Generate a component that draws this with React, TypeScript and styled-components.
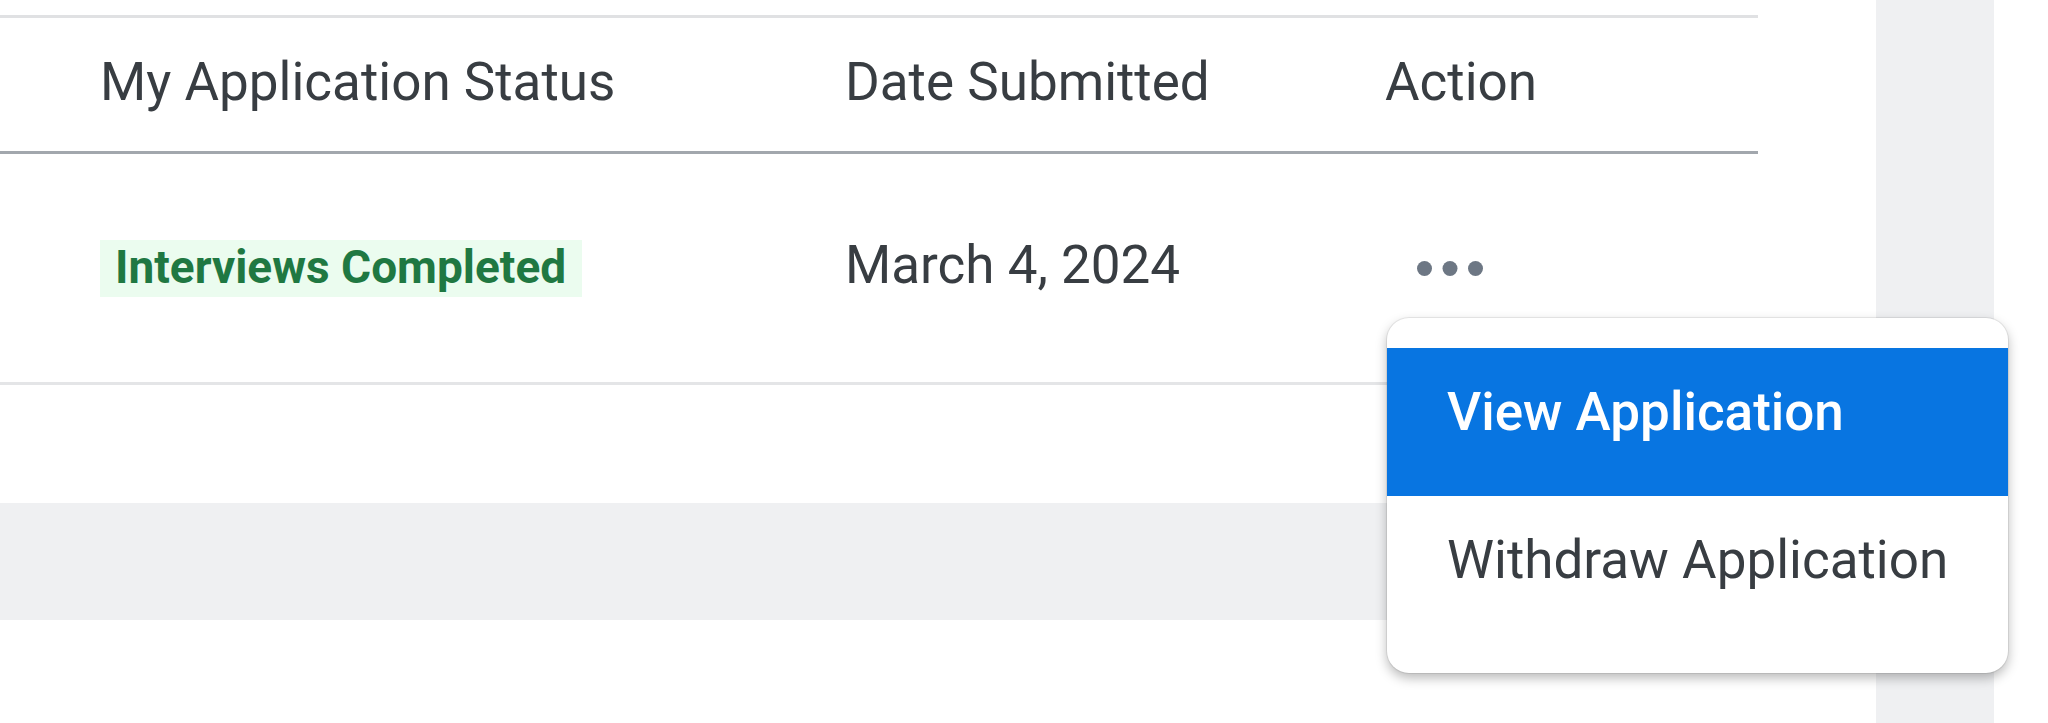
import React from "react";
import styled, { createGlobalStyle } from "styled-components";

const GlobalStyle = createGlobalStyle`
  html, body, #root {
    margin: 0;
    padding: 0;
    height: 100%;
  }
  body {
    font-family: "Roboto", "Liberation Sans", sans-serif;
    background: #eff0f2;
  }
`;

const Page = styled.div`
  display: flex;
  gap: 118px;
  min-height: 100vh;
  background: #eff0f2;
`;

const Main = styled.div`
  width: 1876px;
  flex-shrink: 0;
  display: flex;
  flex-direction: column;
  gap: 117px;
`;

const Card = styled.div`
  background: white;
  padding: 15px 118px 118px 0;
`;

const LowerCard = styled.div`
  background: white;
  flex: 1;
`;

const SidePanel = styled.div`
  flex: 1;
  background: white;
`;

const Table = styled.div`
  border-top: 3px solid #e0e1e3;
`;

const Row = styled.div<{ $head?: boolean }>`
  display: grid;
  grid-template-columns: 745px 540px 1fr;
  padding-left: 100px;
  height: ${(p) => (p.$head ? 133 : 228)}px;
  border-bottom: 3px solid ${(p) => (p.$head ? "#a2a7ad" : "#e4e5e7")};
`;

const Cell = styled.div`
  display: flex;
  align-items: center;
  padding-bottom: 6px;
  font-size: 53px;
  line-height: 62px;
  color: #383d42;
`;

const BadgeCell = styled(Cell)`
  padding-bottom: 0;
`;

const ActionCell = styled.div`
  position: relative;
  display: flex;
  align-items: center;
`;

const Badge = styled.span`
  display: inline-flex;
  align-items: center;
  height: 57px;
  padding: 0 16px 2px 15px;
  box-sizing: border-box;
  background: #ebfcef;
  color: #1f7842;
  font-size: 46px;
  font-weight: 700;
  line-height: 1;
`;

const DotsButton = styled.button`
  display: flex;
  align-items: center;
  margin-left: 32px;
  padding: 0;
  border: none;
  background: none;
`;

const Menu = styled.div`
  position: absolute;
  left: 2px;
  top: 164px;
  width: 621px;
  padding: 30px 0 29px;
  background: white;
  border-radius: 22px;
  box-shadow: 0 0 0 1px rgba(0, 0, 0, 0.07), 0 5px 12px rgba(0, 0, 0, 0.28);
  z-index: 2;
`;

const MenuItem = styled.div<{ $active?: boolean }>`
  padding: 33px 60px 53px;
  font-size: 53px;
  line-height: 62px;
  white-space: nowrap;
  font-weight: ${(p) => (p.$active ? 500 : 400)};
  color: ${(p) => (p.$active ? "white" : "#383d42")};
  background: ${(p) => (p.$active ? "#0875e1" : "transparent")};
`;

const Dots = () => (
  <svg width="66" height="15" viewBox="0 0 66 15">
    <circle cx="7.5" cy="7.5" r="7.5" fill="#6d7784" />
    <circle cx="33" cy="7.5" r="7.5" fill="#6d7784" />
    <circle cx="58.5" cy="7.5" r="7.5" fill="#6d7784" />
  </svg>
);

export default function App() {
  return (
    <>
      <GlobalStyle />
      <Page>
        <Main>
          <Card>
            <Table>
              <Row $head>
                <Cell>My Application Status</Cell>
                <Cell>Date Submitted</Cell>
                <Cell>Action</Cell>
              </Row>
              <Row>
                <BadgeCell>
                  <Badge>Interviews Completed</Badge>
                </BadgeCell>
                <Cell>March 4, 2024</Cell>
                <ActionCell>
                  <DotsButton aria-label="Related actions">
                    <Dots />
                  </DotsButton>
                  <Menu>
                    <MenuItem $active>View Application</MenuItem>
                    <MenuItem>Withdraw Application</MenuItem>
                  </Menu>
                </ActionCell>
              </Row>
            </Table>
          </Card>
          <LowerCard />
        </Main>
        <SidePanel />
      </Page>
    </>
  );
}
